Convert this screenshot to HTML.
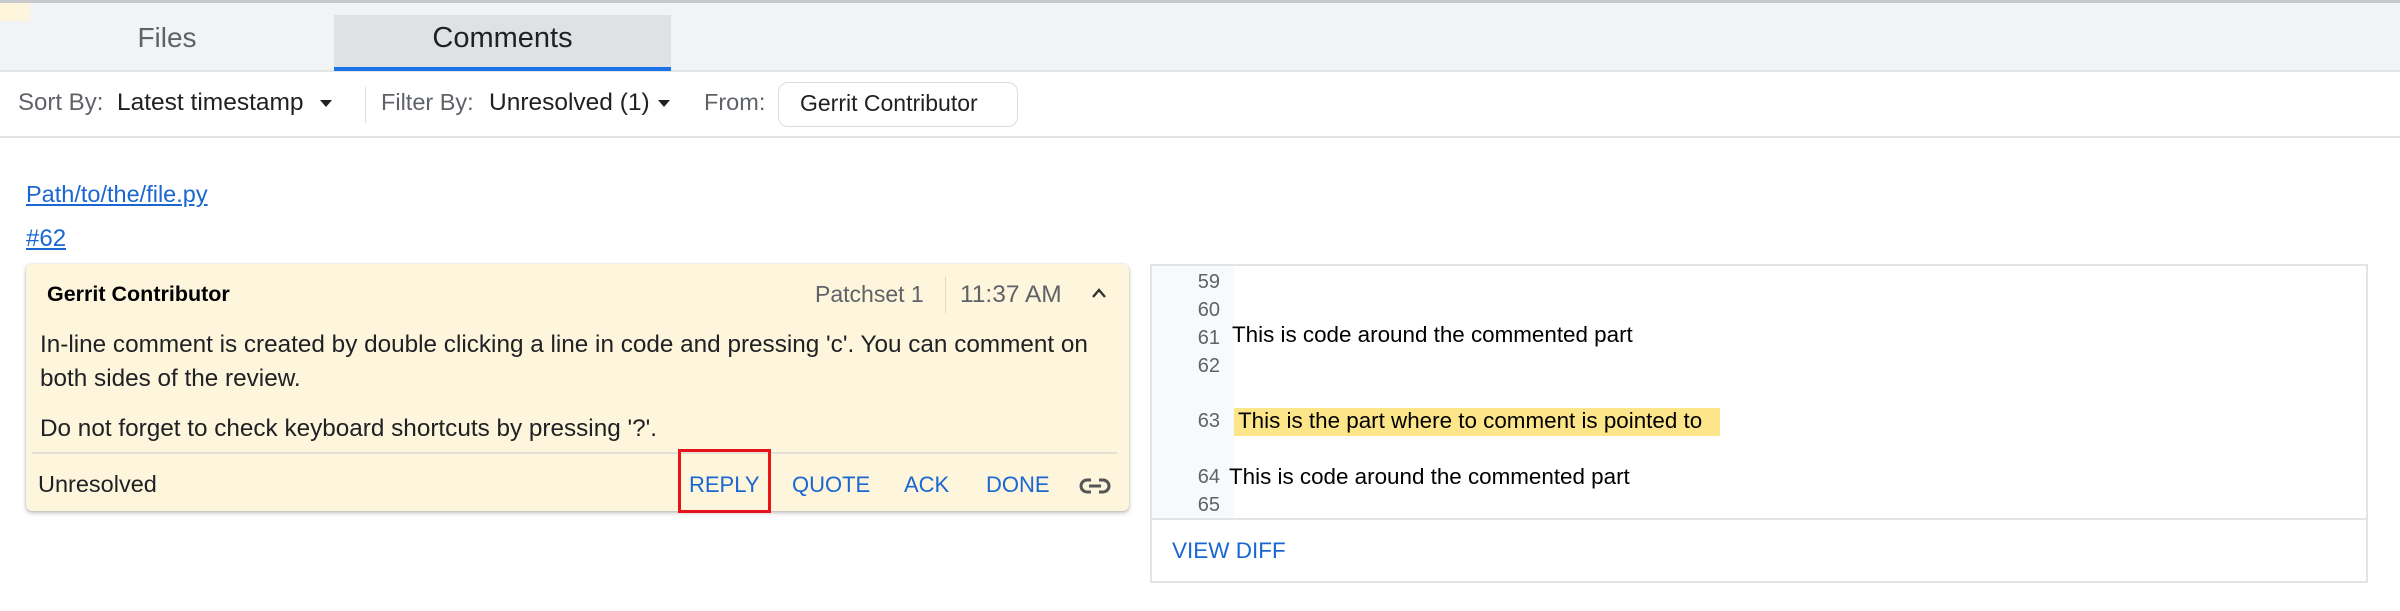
<!DOCTYPE html>
<html><head><meta charset="utf-8"><style>
*{margin:0;padding:0;box-sizing:border-box}
body{width:2400px;height:611px;background:#fff;position:relative;overflow:hidden;font-family:"Liberation Sans",sans-serif;color:#202124}
.a{position:absolute;white-space:nowrap}
.lnk{color:#1967d2}
</style></head><body>
<div class="a" style="left:0;top:0;width:2400px;height:72px;background:#f1f3f4;border-bottom:2px solid #e3e4e6"></div>
<div class="a" style="left:0;top:0;width:2400px;height:3px;background:#c8c9cb"></div>
<div class="a" style="left:0;top:3px;width:30px;height:18px;background:#fdf5dc"></div>
<div class="a" style="left:334px;top:15px;width:337px;height:56px;background:#dfe1e5;border-bottom:4px solid #1a73e8"></div>
<div class="a" style="left:0;top:22px;width:334px;text-align:center;font-size:28px;color:#5f6368">Files</div>
<div class="a" style="left:334px;top:22px;width:337px;text-align:center;font-size:29px;color:#202124">Comments</div>

<div class="a" style="left:0;top:136px;width:2400px;height:2px;background:#e3e4e6"></div>
<div class="a" style="left:18px;top:89px;font-size:24px;color:#5f6368">Sort By:</div>
<div class="a" style="left:117px;top:89px;font-size:24.5px">Latest timestamp</div>
<div class="a" style="left:320px;top:100px;border-left:6px solid transparent;border-right:6px solid transparent;border-top:7px solid #202124"></div>
<div class="a" style="left:365px;top:87px;width:1px;height:36px;background:#dadce0"></div>
<div class="a" style="left:381px;top:89px;font-size:23.5px;color:#5f6368">Filter By:</div>
<div class="a" style="left:489px;top:89px;font-size:24.5px">Unresolved (1)</div>
<div class="a" style="left:658px;top:100px;border-left:6px solid transparent;border-right:6px solid transparent;border-top:7px solid #202124"></div>
<div class="a" style="left:704px;top:89px;font-size:23.5px;color:#5f6368">From:</div>
<div class="a" style="left:778px;top:82px;width:240px;height:45px;border:1px solid #dadce0;border-radius:10px"></div>
<div class="a" style="left:800px;top:90px;font-size:23px">Gerrit Contributor</div>

<div class="a lnk" style="left:26px;top:181px;font-size:23.5px;text-decoration:underline">Path/to/the/file.py</div>
<div class="a lnk" style="left:26px;top:225px;font-size:24px;text-decoration:underline">#62</div>

<div class="a" style="left:26px;top:264px;width:1103px;height:247px;background:#fdf5dc;border-radius:6px;box-shadow:0 2px 4px rgba(0,0,0,.25),0 0 2px rgba(0,0,0,.12)"></div>
<div class="a" style="left:47px;top:282px;font-size:21.5px;font-weight:bold;color:#000">Gerrit Contributor</div>
<div class="a" style="left:815px;top:281px;font-size:23px;color:#5f6368">Patchset 1</div>
<div class="a" style="left:945px;top:277px;width:1px;height:36px;background:#e0d8c0"></div>
<div class="a" style="left:960px;top:281px;font-size:24.5px;color:#5f6368">11:37 AM</div>
<svg class="a" style="left:1090px;top:286px" width="18" height="14" viewBox="0 0 18 14"><path d="M3 11 L9 4 L15 11" fill="none" stroke="#333" stroke-width="2.4"/></svg>
<div class="a" style="left:40px;top:331px;font-size:24.3px;color:#202124">In-line comment is created by double clicking a line in code and pressing 'c'. You can comment on</div>
<div class="a" style="left:40px;top:365px;font-size:24.3px;color:#202124">both sides of the review.</div>
<div class="a" style="left:40px;top:415px;font-size:24.3px;color:#202124">Do not forget to check keyboard shortcuts by pressing '?'.</div>
<div class="a" style="left:32px;top:452px;width:1085px;height:2px;background:#e3e0d5"></div>
<div class="a" style="left:38px;top:471px;font-size:23.5px;color:#202124">Unresolved</div>
<div class="a" style="left:678px;top:449px;width:93px;height:64px;border:3px solid #e8141c"></div>
<div class="a lnk" style="left:689px;top:472px;font-size:22px">REPLY</div>
<div class="a lnk" style="left:792px;top:472px;font-size:22px">QUOTE</div>
<div class="a lnk" style="left:904px;top:472px;font-size:22px">ACK</div>
<div class="a lnk" style="left:986px;top:472px;font-size:22px">DONE</div>
<svg class="a" style="left:1079px;top:476px" width="32" height="20" viewBox="0 0 32 20"><path d="M12 4 H8 a6 6 0 0 0 0 12 H12 M20 4 H24 a6 6 0 0 1 0 12 H20 M10 10 H22" fill="none" stroke="#555" stroke-width="3"/></svg>

<div class="a" style="left:1150px;top:264px;width:1218px;height:319px;border:2px solid #e3e4e6"></div>
<div class="a" style="left:1152px;top:266px;width:82px;height:252px;background:#f8f9fa"></div>
<div class="a" style="left:1152px;top:518px;width:1214px;height:2px;background:#e3e4e6"></div>
<div class="a" style="left:1234px;top:408px;width:486px;height:28px;background:#fde68a"></div>
<div class="a" style="left:1152px;top:268px;width:68px;text-align:right;font-size:20px;color:#5f6368;line-height:28px">59<br>60<br>61<br>62</div>
<div class="a" style="left:1152px;top:407px;width:68px;text-align:right;font-size:20px;color:#5f6368;line-height:28px">63</div>
<div class="a" style="left:1152px;top:463px;width:68px;text-align:right;font-size:20px;color:#5f6368;line-height:28px">64<br>65</div>
<div class="a" style="left:1232px;top:322px;font-size:22.4px;color:#000">This is code around the commented part</div>
<div class="a" style="left:1238px;top:408px;font-size:22.4px;color:#000">This is the part where to comment is pointed to</div>
<div class="a" style="left:1229px;top:464px;font-size:22.4px;color:#000">This is code around the commented part</div>
<div class="a lnk" style="left:1172px;top:538px;font-size:22.5px">VIEW DIFF</div>
</body></html>
